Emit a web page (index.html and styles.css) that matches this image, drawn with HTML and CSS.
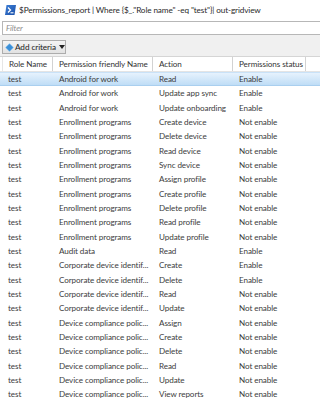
FILE: index.html
```html
<!DOCTYPE html>
<html>
<head>
<meta charset="utf-8">
<link rel="stylesheet" href="styles.css">
</head>
<body>
<div class="title">
  <svg class="ps-icon" width="11" height="10" viewBox="0 0 11 10">
    <defs><linearGradient id="g" x1="0" y1="0" x2="1" y2="1"><stop offset="0" stop-color="#3d7fd6"/><stop offset="1" stop-color="#1a4fa8"/></linearGradient></defs>
    <polygon points="1.5,0 11,0 9.5,10 0,10" fill="url(#g)"/>
    <polyline points="3,2.5 5.5,5 3,7.5" fill="none" stroke="#fff" stroke-width="1.3"/>
    <line x1="5.5" y1="7.8" x2="8.5" y2="7.8" stroke="#fff" stroke-width="1.1"/>
  </svg>
  <span class="title-text">$Permissions_report | Where {$_."Role name" -eq "test"}| out-gridview</span>
</div>
<div class="filter"><span class="filter-ph">Filter</span></div>
<div class="toolbar">
  <div class="btn">
    <span class="diamond"></span>
    <span class="btn-text">Add criteria</span>
    <span class="caret"></span>
  </div>
</div>
<div class="grid">
  <div class="row head">
    <div class="c c1">Role Name</div><div class="c c2">Permission friendly Name</div><div class="c c3">Action</div><div class="c c4">Permissions status</div><div class="c c5"></div>
  </div>
  <div class="row sel"><div class="c c1">test</div><div class="c c2">Android for work</div><div class="c c3">Read</div><div class="c c4">Enable</div></div>
  <div class="row"><div class="c c1">test</div><div class="c c2">Android for work</div><div class="c c3">Update app sync</div><div class="c c4">Enable</div></div>
  <div class="row"><div class="c c1">test</div><div class="c c2">Android for work</div><div class="c c3">Update onboarding</div><div class="c c4">Enable</div></div>
  <div class="row"><div class="c c1">test</div><div class="c c2">Enrollment programs</div><div class="c c3">Create device</div><div class="c c4">Not enable</div></div>
  <div class="row"><div class="c c1">test</div><div class="c c2">Enrollment programs</div><div class="c c3">Delete device</div><div class="c c4">Not enable</div></div>
  <div class="row"><div class="c c1">test</div><div class="c c2">Enrollment programs</div><div class="c c3">Read device</div><div class="c c4">Not enable</div></div>
  <div class="row"><div class="c c1">test</div><div class="c c2">Enrollment programs</div><div class="c c3">Sync device</div><div class="c c4">Not enable</div></div>
  <div class="row"><div class="c c1">test</div><div class="c c2">Enrollment programs</div><div class="c c3">Assign profile</div><div class="c c4">Not enable</div></div>
  <div class="row"><div class="c c1">test</div><div class="c c2">Enrollment programs</div><div class="c c3">Create profile</div><div class="c c4">Not enable</div></div>
  <div class="row"><div class="c c1">test</div><div class="c c2">Enrollment programs</div><div class="c c3">Delete profile</div><div class="c c4">Not enable</div></div>
  <div class="row"><div class="c c1">test</div><div class="c c2">Enrollment programs</div><div class="c c3">Read profile</div><div class="c c4">Not enable</div></div>
  <div class="row"><div class="c c1">test</div><div class="c c2">Enrollment programs</div><div class="c c3">Update profile</div><div class="c c4">Not enable</div></div>
  <div class="row"><div class="c c1">test</div><div class="c c2">Audit data</div><div class="c c3">Read</div><div class="c c4">Enable</div></div>
  <div class="row"><div class="c c1">test</div><div class="c c2">Corporate device identif...</div><div class="c c3">Create</div><div class="c c4">Enable</div></div>
  <div class="row"><div class="c c1">test</div><div class="c c2">Corporate device identif...</div><div class="c c3">Delete</div><div class="c c4">Enable</div></div>
  <div class="row"><div class="c c1">test</div><div class="c c2">Corporate device identif...</div><div class="c c3">Read</div><div class="c c4">Not enable</div></div>
  <div class="row"><div class="c c1">test</div><div class="c c2">Corporate device identif...</div><div class="c c3">Update</div><div class="c c4">Not enable</div></div>
  <div class="row"><div class="c c1">test</div><div class="c c2">Device compliance polic...</div><div class="c c3">Assign</div><div class="c c4">Not enable</div></div>
  <div class="row"><div class="c c1">test</div><div class="c c2">Device compliance polic...</div><div class="c c3">Create</div><div class="c c4">Not enable</div></div>
  <div class="row"><div class="c c1">test</div><div class="c c2">Device compliance polic...</div><div class="c c3">Delete</div><div class="c c4">Not enable</div></div>
  <div class="row"><div class="c c1">test</div><div class="c c2">Device compliance polic...</div><div class="c c3">Read</div><div class="c c4">Not enable</div></div>
  <div class="row"><div class="c c1">test</div><div class="c c2">Device compliance polic...</div><div class="c c3">Update</div><div class="c c4">Not enable</div></div>
  <div class="row"><div class="c c1">test</div><div class="c c2">Device compliance polic...</div><div class="c c3">View reports</div><div class="c c4">Not enable</div></div>
</div>
</body>
</html>
```
FILE: styles.css
```css
html, body {
  margin: 0;
  padding: 0;
  background: #ffffff;
  overflow: hidden;
}
body {
  font-family: Lato, "Noto Sans", sans-serif;
  font-size: 8.1px;
  letter-spacing: -0.08px;
  color: #3c3c3c;
  width: 320px;
  height: 400px;
}
.title {
  height: 20px;
  display: flex;
  align-items: center;
  padding-left: 5px;
  gap: 3px;
  box-sizing: border-box;
  padding-bottom: 1px;
}
.ps-icon { flex: none; }
.title-text {
  font-size: 8.2px;
  letter-spacing: -0.12px;
  color: #2a2a2a;
  white-space: nowrap;
}
.filter {
  margin: 1px 0 0 2px;
  height: 14px;
  border: 1px solid #b7b7b7;
  border-right: none;
  box-sizing: border-box;
  display: flex;
  align-items: center;
  padding-left: 3px;
}
.filter-ph {
  font-style: italic;
  color: #8c8c8c;
  font-size: 8px;
}
.toolbar {
  background: #f0f0f0;
  height: 21px;
  box-sizing: border-box;
  padding: 5px 0 0 2px;
}
.btn {
  width: 64px;
  height: 14px;
  box-sizing: border-box;
  border: 1px solid #acacac;
  background: linear-gradient(#f4f4f4, #e2e2e2);
  display: flex;
  align-items: center;
  padding-left: 3px;
  gap: 3px;
}
.diamond {
  width: 5px;
  height: 5px;
  background: #3a8fd8;
  transform: rotate(45deg);
  box-shadow: 0 0 0 0.5px #7bb9ea;
  margin-left: 1px;
  flex: none;
}
.btn-text {
  color: #222;
  font-size: 8.2px;
  white-space: nowrap;
}
.caret {
  flex: none;
  width: 0;
  height: 0;
  border-left: 3px solid transparent;
  border-right: 3px solid transparent;
  border-top: 4px solid #222;
}
.grid {
  border-top: 1px solid #d5d5d5;
}
.row {
  display: grid;
  grid-template-columns: 51px 100px 80px 73px 1fr;
  height: 14.33px;
  align-items: center;
  padding-left: 2px;
  white-space: nowrap;
}
.row.head {
  height: 14px;
  align-items: stretch;
  border-bottom: 1px solid #e4e4e4;
}
.head .c {
  border-right: 1px solid #d2d2d2;
  display: flex;
  align-items: center;
  color: #333;
}
.head .c1 { border-left: 1px solid #e6e6e6; }
.head .c5 { border-right: none; }
.c {
  padding-left: 6px;
  overflow: hidden;
}
.row.sel {
  background: linear-gradient(#e6f2fd, #bfddf6);
  border-top: 1px solid #c9e2f8;
  border-bottom: 1px solid #a9cfef;
  box-sizing: border-box;
}
```
